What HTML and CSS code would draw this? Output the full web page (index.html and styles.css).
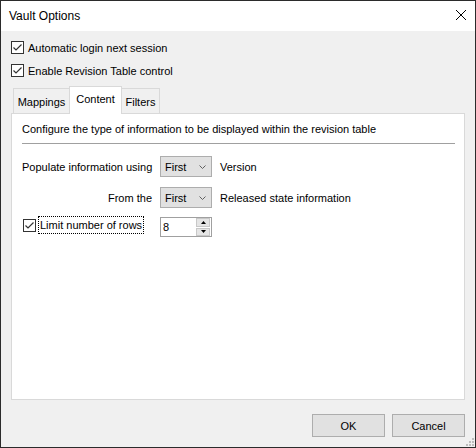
FILE: index.html
```html
<!DOCTYPE html>
<html>
<head>
<meta charset="utf-8">
<link rel="stylesheet" href="styles.css">
</head>
<body>
<div class="window">
  <div class="titlebar">
    <span class="title">Vault Options</span>
    <svg class="close" width="10" height="10" viewBox="0 0 10 10"><path d="M0 0L10 10M10 0L0 10" stroke="#000" stroke-width="1" fill="none"/></svg>
  </div>
  <div class="client">
    <div class="check-row">
      <svg class="cb" width="13" height="13" viewBox="0 0 13 13"><rect x="0.5" y="0.5" width="12" height="12" fill="#fff" stroke="#333"/><path d="M2.5 6.5L5 9L10.5 3.5" stroke="#333" stroke-width="1.2" fill="none"/></svg>
      <span class="cb-label">Automatic login next session</span>
    </div>
    <div class="check-row">
      <svg class="cb" width="13" height="13" viewBox="0 0 13 13"><rect x="0.5" y="0.5" width="12" height="12" fill="#fff" stroke="#333"/><path d="M2.5 6.5L5 9L10.5 3.5" stroke="#333" stroke-width="1.2" fill="none"/></svg>
      <span class="cb-label">Enable Revision Table control</span>
    </div>
    <div class="tabs">
      <div class="tab tab-first">Mappings</div>
      <div class="tab tab-selected">Content</div>
      <div class="tab tab-last">Filters</div>
    </div>
    <div class="panel">
      <div class="desc">Configure the type of information to be displayed within the revision table</div>
      <div class="sep"></div>
      <div class="form-row row-1">
        <span class="lbl">Populate information using</span>
        <div class="combo"><span class="combo-text">First</span><svg class="chev" width="7" height="4" viewBox="0 0 7 4"><path d="M0.5 0.5L3.5 3.5L6.5 0.5" stroke="#606060" fill="none"/></svg></div>
        <span class="after">Version</span>
      </div>
      <div class="form-row row-2">
        <span class="lbl lbl-right">From the</span>
        <div class="combo"><span class="combo-text">First</span><svg class="chev" width="7" height="4" viewBox="0 0 7 4"><path d="M0.5 0.5L3.5 3.5L6.5 0.5" stroke="#606060" fill="none"/></svg></div>
        <span class="after">Released state information</span>
      </div>
      <div class="form-row row-3">
        <div class="limit">
          <svg class="cb cb-limit" width="13" height="13" viewBox="0 0 13 13"><rect x="0.5" y="0.5" width="12" height="12" fill="#fff" stroke="#333"/><path d="M2.5 6.5L5 9L10.5 3.5" stroke="#333" stroke-width="1.2" fill="none"/></svg>
          <span class="focus-label">Limit number of rows</span>
        </div>
        <div class="spinner">
          <span class="spin-value">8</span>
          <div class="spin-buttons">
            <div class="spin-btn"><svg width="5" height="3" viewBox="0 0 5 3"><path d="M2.5 0L5 3H0Z" fill="#000"/></svg></div>
            <div class="spin-btn"><svg width="5" height="3" viewBox="0 0 5 3"><path d="M0 0H5L2.5 3Z" fill="#000"/></svg></div>
          </div>
        </div>
      </div>
    </div>
    <div class="footer">
      <button class="btn">OK</button>
      <button class="btn">Cancel</button>
    </div>
  </div>
  <svg class="grip" width="8" height="8" viewBox="0 0 8 8" fill="#bdbdbd">
    <rect x="6" y="0" width="2" height="2"/>
    <rect x="3" y="3" width="2" height="2"/><rect x="6" y="3" width="2" height="2"/>
    <rect x="0" y="6" width="2" height="2"/><rect x="3" y="6" width="2" height="2"/><rect x="6" y="6" width="2" height="2"/>
  </svg>
</div>
</body>
</html>
```

FILE: styles.css
```css
html, body {
  margin: 0;
  padding: 0;
}
body {
  font-family: "Liberation Sans", Arial, sans-serif;
  font-size: 11px;
  color: #000;
  background: #f0f0f0;
}
.window {
  position: relative;
  box-sizing: border-box;
  width: 476px;
  height: 448px;
  border: 1px solid #2b2b2b;
  background: #f0f0f0;
  display: flex;
  flex-direction: column;
}
.titlebar {
  height: 30px;
  background: #fff;
  display: flex;
  align-items: center;
  justify-content: space-between;
  padding: 0 9px 0 8px;
  flex: none;
}
.title {
  font-size: 12px;
}
.close {
  display: block;
  margin-bottom: 2px;
}
.client {
  flex: 1;
  display: flex;
  flex-direction: column;
  padding: 5px 10px 0 10px;
}
.check-row {
  height: 23px;
  display: flex;
  align-items: center;
  gap: 4px;
}
.cb {
  display: block;
  flex: none;
}
.tabs {
  display: flex;
  align-items: flex-end;
  height: 27px;
  margin-top: 4px;
  padding-left: 2px;
}
.tab {
  box-sizing: border-box;
  height: 25px;
  border-top: 1px solid #d9d9d9;
  background: #f0f0f0;
  display: flex;
  align-items: center;
  justify-content: center;
  padding-top: 1px;
}
.tab-first {
  width: 56px;
  border-left: 1px solid #d9d9d9;
}
.tab-selected {
  position: relative;
  z-index: 1;
  width: 53px;
  height: 28px;
  margin-bottom: -1px;
  background: #fff;
  border-left: 1px solid #d9d9d9;
  border-right: 1px solid #d9d9d9;
  padding-top: 0;
  padding-bottom: 3px;
}
.tab-last {
  width: 38px;
  border-right: 1px solid #d9d9d9;
}
.panel {
  box-sizing: border-box;
  width: 454px;
  height: 287px;
  border: 1px solid #d9d9d9;
  background: #fff;
  padding: 7px 10px 0 10px;
  flex: none;
}
.desc {
  line-height: 16px;
  white-space: nowrap;
}
.sep {
  width: 433px;
  height: 1px;
  background: #a0a0a0;
  margin-top: 6px;
}
.form-row {
  display: grid;
  grid-template-columns: 130px 52px auto;
  column-gap: 8px;
  align-items: center;
  height: 21px;
}
.row-1 {
  margin-top: 12px;
}
.row-2 {
  margin-top: 10px;
}
.row-3 {
  margin-top: 9px;
  height: 20px;
  align-items: start;
}
.lbl {
  white-space: nowrap;
}
.lbl-right {
  justify-self: end;
}
.after {
  white-space: nowrap;
}
.combo {
  box-sizing: border-box;
  height: 21px;
  border: 1px solid #adadad;
  background: #e1e1e1;
  display: flex;
  align-items: center;
  justify-content: space-between;
  padding: 0 5px 0 4px;
}
.chev {
  display: block;
}
.limit {
  display: flex;
  align-items: flex-start;
  gap: 2px;
  padding-left: 1px;
}
.cb-limit {
  margin-top: 2px;
}
.focus-label {
  box-sizing: border-box;
  height: 18px;
  margin-top: -1px;
  border: 1px dotted #000;
  padding: 0 1px;
  line-height: 16px;
  white-space: nowrap;
}
.spinner {
  box-sizing: border-box;
  height: 20px;
  border: 1px solid #a0a0a0;
  background: #fff;
  display: flex;
  align-items: stretch;
}
.spin-value {
  flex: 1;
  padding-left: 2px;
  line-height: 18px;
}
.spin-buttons {
  width: 14px;
  margin-right: 1px;
  display: flex;
  flex-direction: column;
  gap: 1px;
}
.spin-btn {
  flex: 1;
  box-sizing: border-box;
  background: #e5e5e5;
  border: 1px solid #c8c8c8;
  display: flex;
  align-items: center;
  justify-content: center;
}
.spin-btn svg {
  display: block;
}
.footer {
  display: flex;
  justify-content: flex-end;
  gap: 7px;
  margin-top: 14px;
}
.btn {
  box-sizing: border-box;
  width: 73px;
  height: 23px;
  border: 1px solid #adadad;
  background: #e1e1e1;
  font-family: "Liberation Sans", Arial, sans-serif;
  font-size: 11px;
  color: #000;
  padding: 0;
  margin: 0;
}
.grip {
  position: absolute;
  right: 1px;
  bottom: 1px;
  display: block;
}
```
